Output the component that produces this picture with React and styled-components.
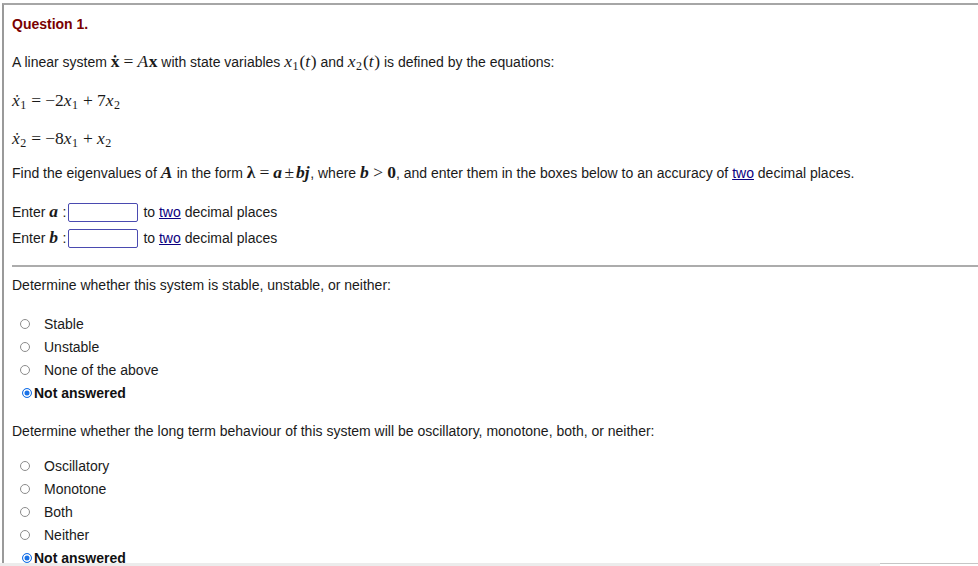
import React from "react";
import styled, { createGlobalStyle } from "styled-components";

const GlobalStyle = createGlobalStyle`
  html, body {
    margin: 0;
    padding: 0;
    background: #ffffff;
    overflow: hidden;
  }
  body {
    font-family: "Liberation Sans", Arial, sans-serif;
    font-size: 14px;
    color: #1a1a1a;
  }
`;

const Page = styled.div`
  height: 566px;
  overflow: hidden;
  padding-top: 3px;
`;

const Frame = styled.div`
  margin-left: 2px;
  border-left: 2px solid #9a9a9a;
  border-top: 2px solid #a6a6a6;
  padding: 10px 0 0 8px;
  min-height: 600px;
`;

const Title = styled.h3`
  margin: 0;
  font-size: 14px;
  line-height: 18px;
  font-weight: bold;
  color: #7a0000;
`;

const Para = styled.p`
  margin: ${(p) => p.$top || 0}px 0 0 0;
  height: 18px;
  line-height: 18px;
  white-space: nowrap;
`;

const Math = styled.span`
  font-family: "Liberation Serif", "Times New Roman", serif;
  font-size: 17.5px;
  line-height: 1;
  white-space: nowrap;
`;

const V = styled.i`
  font-style: italic;
  font-weight: ${(p) => (p.$bold ? "bold" : "normal")};
  margin-right: 0.5px;
`;

const B = styled.b`
  font-weight: bold;
`;

const Sub = styled.sub`
  font-size: 12px;
  vertical-align: -3px;
  line-height: 0;
  margin-right: 1px;
`;

const Op = styled.span`
  margin: 0 ${(p) => p.$gap ?? 4}px;
`;

const Link = styled.a`
  color: #0b0080;
  text-decoration: underline;
  cursor: pointer;
`;

const AnswerRows = styled.div`
  margin-top: 19px;
  display: flex;
  flex-direction: column;
  gap: 4px;
`;

const AnswerRow = styled.div`
  display: flex;
  align-items: center;
  height: 22px;
`;

const Box = styled.input`
  box-sizing: border-box;
  width: 70px;
  height: 19px;
  margin: 0 5px 0 2px;
  border: 1px solid #4a4ab0;
  border-radius: 2px;
  padding: 0 3px;
  font-size: 13px;
  outline: none;
`;

const Rule = styled.hr`
  margin: 16px 0 0 0;
  border: none;
  border-top: 2px solid #acacac;
  height: 0;
`;

const Options = styled.div`
  margin-top: ${(p) => p.$top}px;
  display: flex;
  flex-direction: column;
`;

const Option = styled.label`
  display: flex;
  align-items: center;
  height: 23px;
  padding-left: ${(p) => (p.$none ? 10 : 8)}px;
  font-weight: ${(p) => (p.$none ? "bold" : "normal")};
  color: ${(p) => (p.$none ? "#111" : "#1a1a1a")};
`;

const Radio = styled.span`
  box-sizing: border-box;
  width: 10px;
  height: 10px;
  border-radius: 50%;
  border: 1px solid ${(p) => (p.$on ? "#1a73e8" : "#8c8c8c")};
  background: ${(p) => (p.$on ? "#1a73e8" : "#fff")};
  box-shadow: ${(p) => (p.$on ? "inset 0 0 0 1.5px #fff" : "none")};
  margin-right: ${(p) => (p.$on ? 2 : 14)}px;
  flex-shrink: 0;
`;

const ScrollStrip = styled.div`
  position: fixed;
  left: 0;
  right: 0;
  bottom: 0;
  height: 3px;
  display: flex;
`;

const StripThumb = styled.div`
  width: 880px;
  background: #ececec;
`;

const StripTrack = styled.div`
  flex: 1;
  border-top: 1px solid #c6c6c6;
  background: #fff;
`;

function Choice({ label, none }) {
  return (
    <Option $none={none}>
      <Radio $on={none} />
      {label}
    </Option>
  );
}

function ChoiceList({ top, labels }) {
  return (
    <Options $top={top}>
      {labels.map((l) => (
        <Choice key={l} label={l} />
      ))}
      <Choice label="Not answered" none />
    </Options>
  );
}

export default function App() {
  return (
    <Page>
      <GlobalStyle />
      <Frame>
        <Title>Question 1.</Title>
        <Para $top={20}>
          A linear system{" "}
          <Math>
            <B>ẋ</B>
            <Op>=</Op>
            <V>A</V>
            <B>x</B>
          </Math>{" "}
          with state variables{" "}
          <Math>
            <V>x</V>
            <Sub>1</Sub>(<V>t</V>)
          </Math>{" "}
          and{" "}
          <Math>
            <V>x</V>
            <Sub>2</Sub>(<V>t</V>)
          </Math>{" "}
          is defined by the equations:
        </Para>
        <Para $top={21}>
          <Math>
            <V>ẋ</V>
            <Sub>1</Sub>
            <Op>=</Op>−2<V>x</V>
            <Sub>1</Sub>
            <Op>+</Op>7<V>x</V>
            <Sub>2</Sub>
          </Math>
        </Para>
        <Para $top={20}>
          <Math>
            <V>ẋ</V>
            <Sub>2</Sub>
            <Op>=</Op>−8<V>x</V>
            <Sub>1</Sub>
            <Op>+</Op>
            <V>x</V>
            <Sub>2</Sub>
          </Math>
        </Para>
        <Para $top={16}>
          Find the eigenvalues of{" "}
          <Math>
            <V $bold>A</V>
          </Math>{" "}
          in the form{" "}
          <Math>
            <B>λ</B>
            <Op>=</Op>
            <V $bold>a</V>
            <Op $gap={2}>±</Op>
            <V $bold>bj</V>
          </Math>
          , where{" "}
          <Math>
            <V $bold>b</V>
            <Op>&gt;</Op>
            <B>0</B>
          </Math>
          , and enter them in the boxes below to an accuracy of <Link>two</Link>{" "}
          decimal places.
        </Para>
        <AnswerRows>
          <AnswerRow>
            Enter&nbsp;
            <Math>
              <V $bold>a</V>
            </Math>
            &nbsp;:
            <Box type="text" />
            to&nbsp;<Link>two</Link>&nbsp;decimal places
          </AnswerRow>
          <AnswerRow>
            Enter&nbsp;
            <Math>
              <V $bold>b</V>
            </Math>
            &nbsp;:
            <Box type="text" />
            to&nbsp;<Link>two</Link>&nbsp;decimal places
          </AnswerRow>
        </AnswerRows>
        <Rule />
        <Para $top={9}>
          Determine whether this system is stable, unstable, or neither:
        </Para>
        <ChoiceList top={18} labels={["Stable", "Unstable", "None of the above"]} />
        <Para $top={18}>
          Determine whether the long term behaviour of this system will be
          oscillatory, monotone, both, or neither:
        </Para>
        <ChoiceList top={14} labels={["Oscillatory", "Monotone", "Both", "Neither"]} />
      </Frame>
      <ScrollStrip>
        <StripThumb />
        <StripTrack />
      </ScrollStrip>
    </Page>
  );
}
